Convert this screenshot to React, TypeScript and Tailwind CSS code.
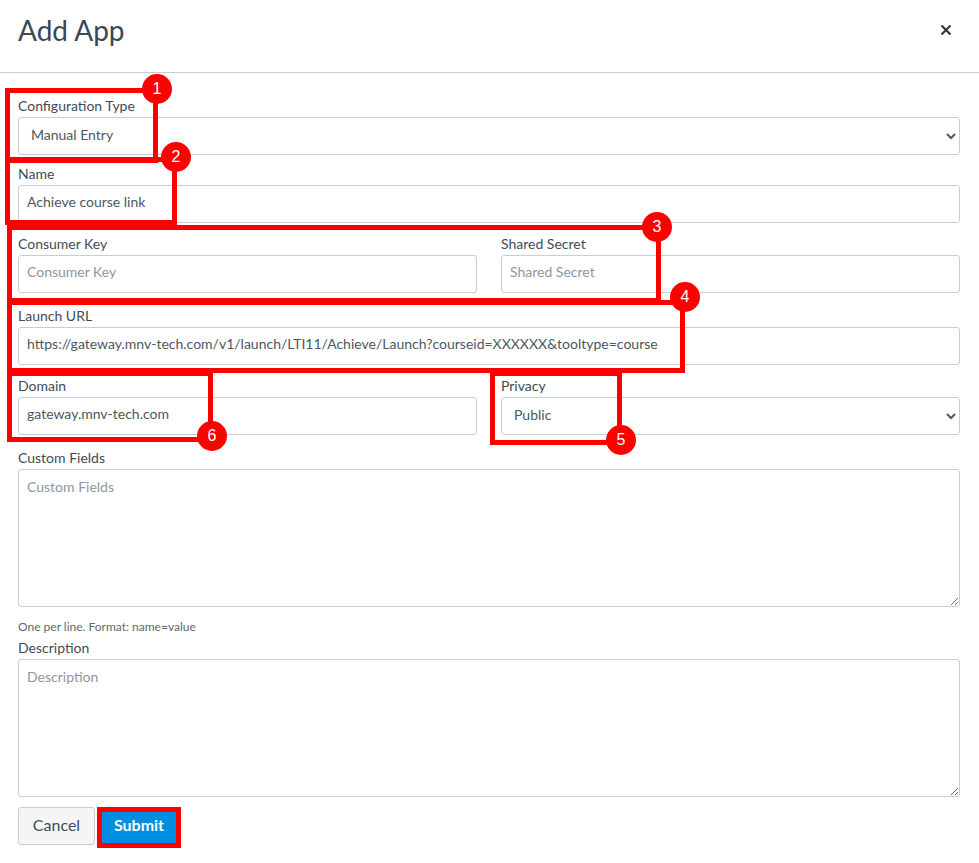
import React from 'react';

const labelCls = 'block text-sm leading-[19px] pb-[2px] text-[#3f4c55]';
const controlCls =
    'block w-full h-[38px] bg-white border border-[#c7cdd1] rounded-[3px] px-2 pb-[6px] text-sm text-[#4b5861] placeholder:text-[#8e979d] outline-none';
const selectCls =
    'block w-full h-[38px] bg-white border border-[#c7cdd1] rounded-[3px] pl-2 pb-1 text-sm text-[#4b5861] outline-none';
const areaCls =
    'block w-full h-[138px] bg-white border border-[#c7cdd1] rounded-[3px] px-2 py-[7px] text-sm leading-5 text-[#4b5861] placeholder:text-[#8e979d] outline-none';

const Field: React.FC<{ label: string; className?: string; children: React.ReactNode }> = ({ label, className, children }) => (
    <div className={className}>
        <label className={labelCls}>{label}</label>
        {children}
    </div>
);

const Callout: React.FC<{ n: number; className: string }> = ({ n, className }) => (
    <div className={`absolute w-[30px] h-[30px] rounded-full bg-[#ff0000] text-white text-[16px] leading-[30px] text-center font-['Liberation_Sans',sans-serif] ${className}`}>
        {n}
    </div>
);

export default function App() {
    return (
        <div className="relative w-[979px] h-[863px] bg-white overflow-hidden font-['Lato',sans-serif]">
            <header className="h-[73px] border-b border-[#c7cdd1] flex items-center justify-between pl-[18px] pr-[26px] pb-[12px]">
                <h1 className="text-[28px] leading-[42px] font-normal text-[#394853]">Add App</h1>
                <svg width="14" height="14" viewBox="0 0 14 14" className="text-[#2d3b45]">
                    <path d="M2.5 2.5l9 9M11.5 2.5l-9 9" stroke="currentColor" strokeWidth="2.2" fill="none" />
                </svg>
            </header>

            <form className="pl-[18px] pt-[23px]">
                <div className="w-[942px]">
                    <Field label="Configuration Type">
                        <select className={selectCls} defaultValue="Manual Entry">
                            <option>Manual Entry</option>
                        </select>
                    </Field>
                    <Field label="Name" className="mt-[9px]">
                        <input className={controlCls} defaultValue="Achieve course link" placeholder="Name" />
                    </Field>
                    <div className="mt-[11px] grid grid-cols-2 gap-6">
                        <Field label="Consumer Key">
                            <input className={controlCls} placeholder="Consumer Key" />
                        </Field>
                        <Field label="Shared Secret">
                            <input className={controlCls} placeholder="Shared Secret" />
                        </Field>
                    </div>
                    <Field label="Launch URL" className="mt-[13px]">
                        <input
                            className={controlCls}
                            defaultValue="https://gateway.mnv-tech.com/v1/launch/LTI11/Achieve/Launch?courseid=XXXXXX&tooltype=course"
                        />
                    </Field>
                    <div className="mt-[11px] grid grid-cols-2 gap-6">
                        <Field label="Domain">
                            <input className={controlCls} defaultValue="gateway.mnv-tech.com" />
                        </Field>
                        <Field label="Privacy">
                            <select className={selectCls} defaultValue="Public">
                                <option>Public</option>
                            </select>
                        </Field>
                    </div>
                    <Field label="Custom Fields" className="mt-[13px]">
                        <textarea className={areaCls} placeholder="Custom Fields" />
                    </Field>
                    <p className="mt-[12px] text-xs leading-[16px] text-[#5c6970]">One per line. Format: name=value</p>
                    <Field label="Description" className="mt-[3px]">
                        <textarea className={areaCls} placeholder="Description" />
                    </Field>
                    <div className="mt-[10px] flex items-start gap-[7px]">
                        <button type="button" className="w-[77px] h-[38px] pb-[2px] bg-[#f5f5f5] border border-[#c7cdd1] rounded-[3px] text-base text-[#3f4c55]">
                            Cancel
                        </button>
                        <button type="button" className="w-[74px] h-[31px] mt-[5px] pb-[5px] bg-[#008ee2] text-base font-bold text-white">
                            Submit
                        </button>
                    </div>
                </div>
            </form>

            {/* numbered red callouts drawn on top of the form */}
            <div className="absolute left-[5px] top-[88px] w-[153px] h-[75px] border-[5px] border-[#ff0000]" />
            <div className="absolute left-[5px] top-[157px] w-[172px] h-[68px] border-[5px] border-[#ff0000]" />
            <div className="absolute left-[7px] top-[225px] w-[654px] h-[78px] border-[5px] border-[#ff0000]" />
            <div className="absolute left-[7px] top-[300px] w-[678px] h-[73px] border-[5px] border-[#ff0000]" />
            <div className="absolute left-[7px] top-[371px] w-[206px] h-[71px] border-[5px] border-[#ff0000]" />
            <div className="absolute left-[490px] top-[371px] w-[132px] h-[74px] border-[5px] border-[#ff0000]" />
            <div className="absolute left-[97px] top-[807px] w-[84px] h-[41px] border-[5px] border-[#ff0000]" />
            <Callout n={1} className="left-[142px] top-[74px]" />
            <Callout n={2} className="left-[161px] top-[142px]" />
            <Callout n={3} className="left-[642px] top-[212px]" />
            <Callout n={4} className="left-[670px] top-[282px]" />
            <Callout n={5} className="left-[606px] top-[425px]" />
            <Callout n={6} className="left-[197px] top-[421px]" />
        </div>
    );
}
